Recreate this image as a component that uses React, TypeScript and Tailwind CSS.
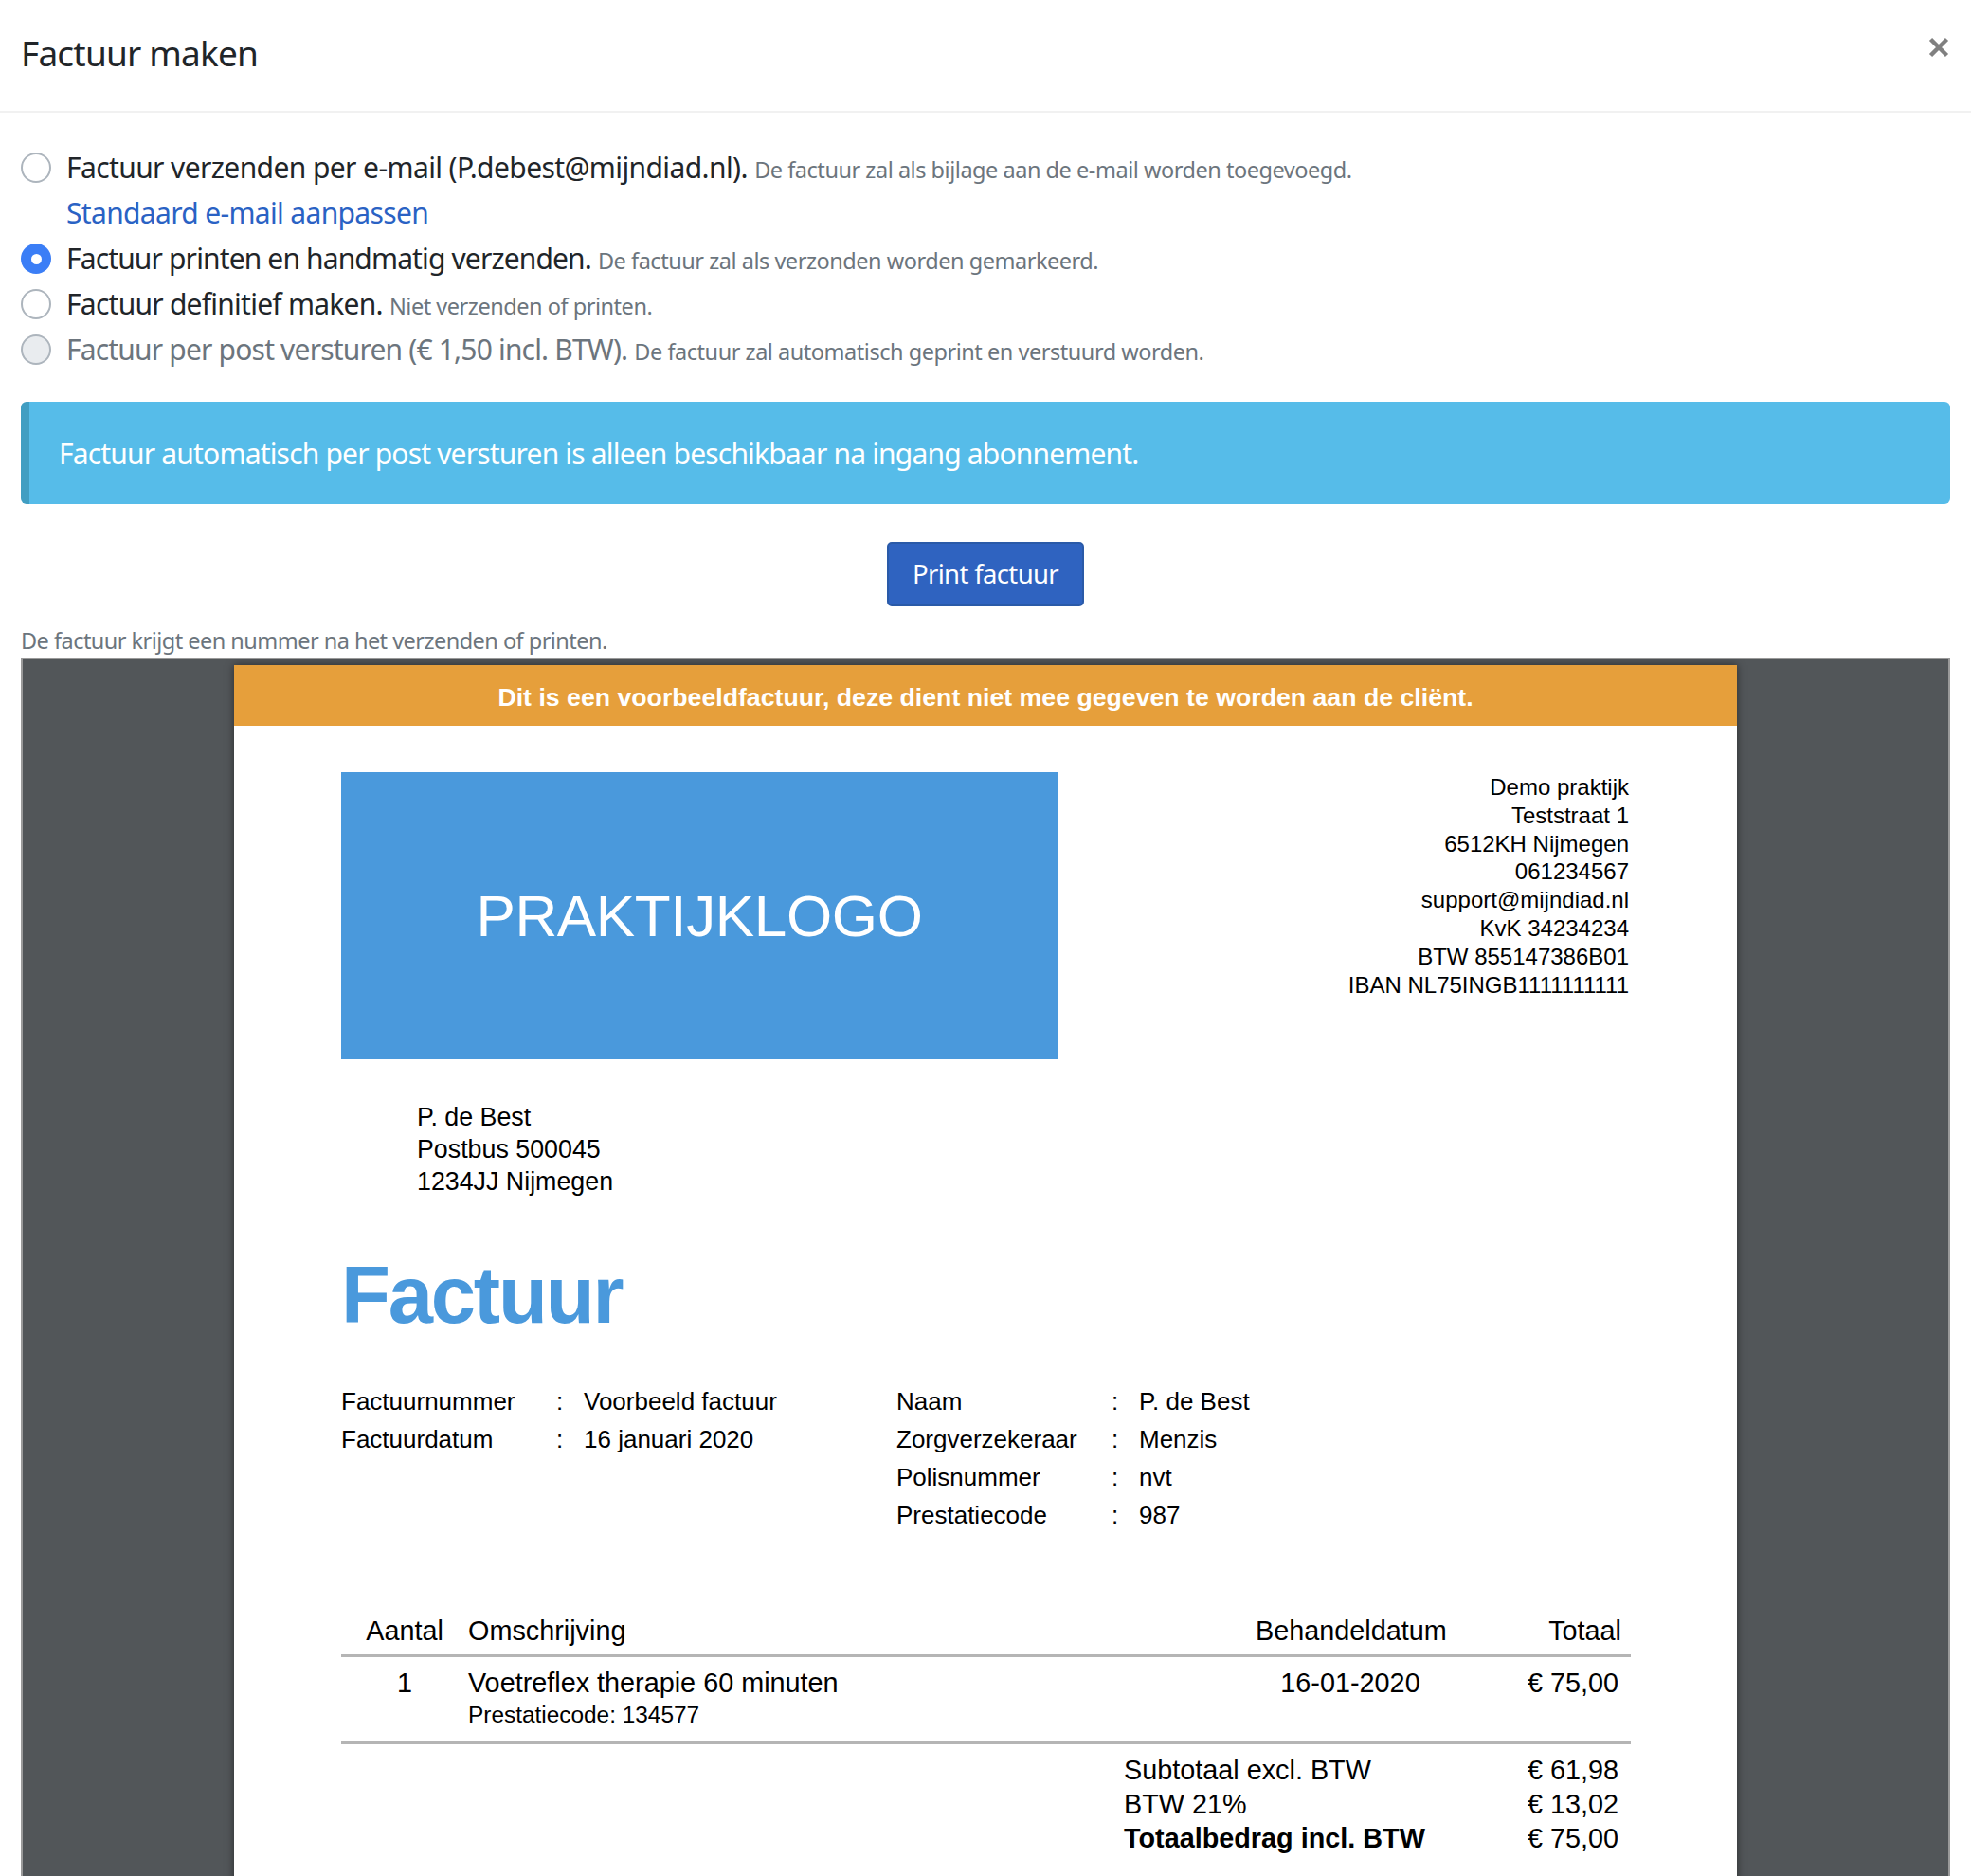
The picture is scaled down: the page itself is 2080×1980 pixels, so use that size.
const options = [
  { label: 'Factuur verzenden per e-mail (P.debest@mijndiad.nl).', hint: 'De factuur zal als bijlage aan de e-mail worden toegevoegd.', state: 'off', track: 'tracking-[-0.6px]' },
  { label: 'Factuur printen en handmatig verzenden.', hint: 'De factuur zal als verzonden worden gemarkeerd.', state: 'on', track: 'tracking-[-0.86px]' },
  { label: 'Factuur definitief maken.', hint: 'Niet verzenden of printen.', state: 'off', track: 'tracking-[-0.75px]' },
  { label: 'Factuur per post versturen (€ 1,50 incl. BTW).', hint: 'De factuur zal automatisch geprint en verstuurd worden.', state: 'disabled', track: 'tracking-[-0.82px]' },
]

const address = ['Demo praktijk', 'Teststraat 1', '6512KH Nijmegen', '061234567', 'support@mijndiad.nl', 'KvK 34234234', 'BTW 855147386B01', 'IBAN NL75INGB1111111111']

function Radio({ state }: { state: string }) {
  if (state === 'on') {
    return (
      <span className="mt-[-2px] flex h-[32px] w-[32px] shrink-0 items-center justify-center rounded-full bg-[#3b7ef6]">
        <span className="h-[11px] w-[11px] rounded-full bg-white" />
      </span>
    )
  }
  return <span className={`mt-[-2px] h-[32px] w-[32px] shrink-0 rounded-full border-2 border-[#adb5bd] ${state === 'disabled' ? 'bg-[#e9ecef]' : 'bg-white'}`} />
}

function InfoRow({ label, value }: { label: string; value: string }) {
  return (
    <div className="flex h-[40px] items-center text-[26px] text-black">
      <span className="w-[227px]">{label}</span>
      <span className="w-[29px]">:</span>
      <span>{value}</span>
    </div>
  )
}

export default function App() {
  return (
    <div className="h-[1980px] w-[2080px] overflow-hidden bg-white font-['Noto_Sans',sans-serif] text-[#212529]">
      <header className="flex h-[119px] items-start justify-between border-b-2 border-[#f1f1f1] pl-[22px] pr-[23px]">
        <h1 className="mt-[31px] text-[37px] leading-[50px] tracking-[-0.8px]">Factuur maken</h1>
        <svg className="mt-[39px]" width="22" height="22" viewBox="0 0 22 22">
          <path d="M2.5 2.5 19.5 19.5M19.5 2.5 2.5 19.5" stroke="#808080" strokeWidth="4.5" />
        </svg>
      </header>

      <main className="px-[22px] pt-[35px]">
        <div className="flex flex-col text-[30px] leading-[48px]">
          {options.map((o, i) => (
            <div key={o.label}>
              <div className="flex h-[48px] items-center gap-[16px]">
                <Radio state={o.state} />
                <p className={`${o.track} ${o.state === 'disabled' ? 'text-[#6c757d]' : ''}`}>
                  {o.label} <span className="text-[23.5px] tracking-[-0.47px] text-[#6c757d]">{o.hint}</span>
                </p>
              </div>
              {i === 0 && <a className="mb-[1px] mt-[-1px] block pl-[48px] tracking-[-0.66px] text-[#2a62c4]">Standaard e-mail aanpassen</a>}
            </div>
          ))}
        </div>

        <div className="mt-[30px] flex h-[108px] items-center rounded-[6px] border-l-[9px] border-[#419ec2] bg-[#56bce9] pl-[31px] pr-4 text-[30px] tracking-[-0.82px] text-white">
          Factuur automatisch per post versturen is alleen beschikbaar na ingang abonnement.
        </div>

        <div className="mt-[40px] flex justify-center">
          <button className="h-[68px] w-[208px] rounded-[5px] border-2 border-[#2a5aa8] bg-[#2f63c0] text-[27.5px] tracking-[-0.65px] text-white">Print factuur</button>
        </div>

        <p className="mt-[18px] text-[23.5px] leading-[36px] tracking-[-0.53px] text-[#6c757d]">De factuur krijgt een nummer na het verzenden of printen.</p>

        <div className="h-[1400px] overflow-hidden border-2 border-[#9a9a9a] bg-[#525659] px-[223px] pt-[6px]">
          <div className="h-[1400px] bg-white font-['Liberation_Sans',sans-serif] text-black shadow-[0_0_8px_rgba(0,0,0,0.5)]">
            <div className="flex h-[64px] items-center justify-center bg-[#e69f3b] pt-[4px] text-[26.7px] font-bold text-white">
              Dit is een voorbeeldfactuur, deze dient niet mee gegeven te worden aan de cliënt.
            </div>

            <div className="px-[113px]">
              <div className="mt-[49px] flex justify-between">
                <div className="flex h-[303px] w-[756px] items-center justify-center bg-[#4a99dc] text-[62px] tracking-[-0.35px] text-white">PRAKTIJKLOGO</div>
                <div className="mr-[1px] pt-[1px] text-right text-[24px] leading-[29.8px]">
                  {address.map((line) => (
                    <div key={line}>{line}</div>
                  ))}
                </div>
              </div>

              <div className="mt-[44px] pl-[80px] text-[26.8px] leading-[34px]">
                <div>P. de Best</div>
                <div>Postbus 500045</div>
                <div>1234JJ Nijmegen</div>
              </div>

              <h2 className="mt-[54px] text-[85px] font-bold leading-[98px] tracking-[-2.2px] text-[#4a99dc]">Factuur</h2>

              <div className="mt-[43px] flex">
                <div className="w-[586px]">
                  <InfoRow label="Factuurnummer" value="Voorbeeld factuur" />
                  <InfoRow label="Factuurdatum" value="16 januari 2020" />
                </div>
                <div>
                  <InfoRow label="Naam" value="P. de Best" />
                  <InfoRow label="Zorgverzekeraar" value="Menzis" />
                  <InfoRow label="Polisnummer" value="nvt" />
                  <InfoRow label="Prestatiecode" value="987" />
                </div>
              </div>

              <div className="mt-[78px] w-[1361px] text-[28.8px]">
                <div className="flex h-[52px] items-center border-b-[3px] border-[#b5b5b5]">
                  <span className="w-[108px] text-right">Aantal</span>
                  <span className="ml-[26px] flex-1">Omschrijving</span>
                  <span className="w-[200px] text-center">Behandeldatum</span>
                  <span className="w-[196px] pr-[10px] text-right">Totaal</span>
                </div>
                <div className="flex h-[92px] items-start border-b-[3px] border-[#b5b5b5] pt-[7px]">
                  <span className="w-[108px] pr-[33px] text-right leading-[40px]">1</span>
                  <div className="ml-[26px] flex-1">
                    <div className="leading-[40px]">Voetreflex therapie 60 minuten</div>
                    <div className="text-[24.4px] leading-[28px]">Prestatiecode: 134577</div>
                  </div>
                  <span className="w-[200px] text-center leading-[40px]">16-01-2020</span>
                  <span className="w-[196px] pr-[13px] text-right leading-[40px]">€ 75,00</span>
                </div>
                <div className="ml-[826px] mt-[9px] leading-[36px]">
                  <div className="flex justify-between pr-[13px]"><span>Subtotaal excl. BTW</span><span>€ 61,98</span></div>
                  <div className="flex justify-between pr-[13px]"><span>BTW 21%</span><span>€ 13,02</span></div>
                  <div className="flex justify-between pr-[13px]"><span className="font-bold">Totaalbedrag incl. BTW</span><span>€ 75,00</span></div>
                </div>
              </div>
            </div>
          </div>
        </div>
      </main>
    </div>
  )
}
